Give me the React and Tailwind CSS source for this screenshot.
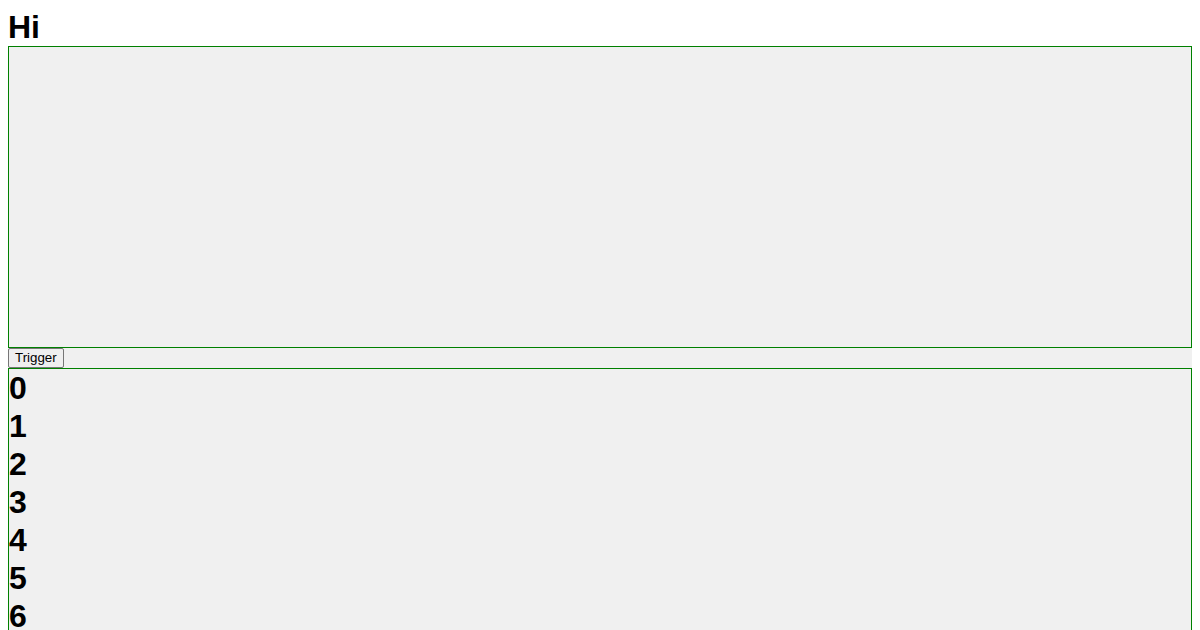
import React from 'react';

const App = () => {
    const rows = [0, 1, 2, 3, 4, 5, 6, 7, 8, 9];

    return (
        <div className="m-2 font-['Liberation_Sans',Arial,sans-serif] text-black">
            <h1 className="text-[32px] font-bold leading-[38px]">Hi</h1>

            <div className="bg-[#f0f0f0]">
                {/* top panel */}
                <div className="h-[302px] border border-[#008000]"></div>

                <button className="block h-5 rounded-[2px] border border-[#767676] bg-[#efefef] px-[6px] text-[13.33px] leading-[16px]">
                    Trigger
                </button>

                {/* list panel */}
                <div className="border border-[#008000]">
                    {rows.map((n) => (
                        <h1 key={n} className="text-[32px] font-bold leading-[38px]">{n}</h1>
                    ))}
                </div>
            </div>
        </div>
    );
};

export default App;
